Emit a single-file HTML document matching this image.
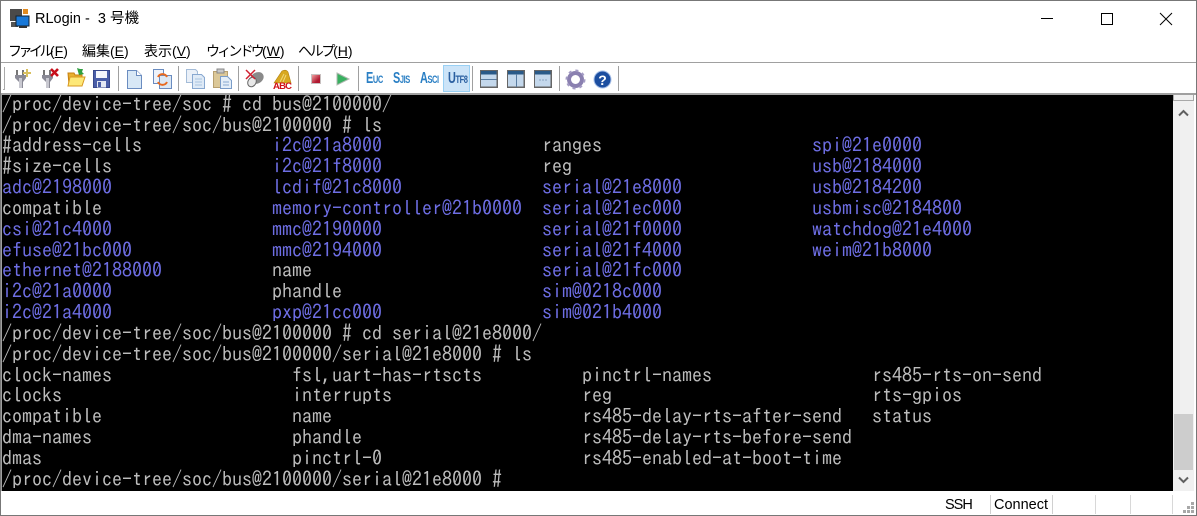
<!DOCTYPE html>
<html><head><meta charset="utf-8"><style>
html,body{margin:0;padding:0;background:#fff}
#w{position:relative;width:1197px;height:516px;overflow:hidden;background:#fff;font-family:"Liberation Sans","Noto Sans CJK JP",sans-serif;color:#000}
.a{position:absolute}
#term{left:2px;top:95px;width:1171px;height:396px;background:#000;overflow:hidden}
.l{position:absolute;left:0;white-space:pre;font:20px/21px "IPAGothic","Liberation Mono",monospace;color:#bcbcbc}
.l b{font-weight:normal;color:#6e6ee4}
.m{position:absolute;top:41px;font-size:14px;line-height:20px;white-space:pre}
.m u{text-decoration:underline}
.s{position:absolute;top:66px;width:1px;height:25px;background:#a0a0a0}
.t{position:absolute;top:71px;color:#2a7fc4;font:bold 11px/16px "Liberation Sans",sans-serif;letter-spacing:-.6px;white-space:pre;transform:scaleX(.68);transform-origin:0 0}
.t i{font-style:normal;font-size:16px}
svg{position:absolute;overflow:visible}
</style></head><body><div id="w">
<div class="a" style="left:0;top:0;width:1195px;height:514px;border:1px solid #777"></div>

<svg style="left:9px;top:8px" width="22" height="22" viewBox="0 0 22 22"><rect x="1" y="1" width="12" height="12" fill="#4a4a4a"/><rect x="2" y="14" width="7" height="5" fill="#555"/><path d="M14 1h5v5h-5z" fill="#e08a20"/><rect x="7" y="8" width="13" height="10" fill="#1878d8" stroke="#123"/><rect x="10" y="18" width="8" height="2" fill="#333"/></svg>
<div class="a" style="left:35px;top:9px;font-size:14.500px;line-height:21px;white-space:pre">RLogin -  3 号機</div>

<div class="a" style="left:1041px;top:18px;width:12px;height:1px;background:#000"></div>
<div class="a" style="left:1101px;top:13px;width:10px;height:10px;border:1px solid #000"></div>
<svg style="left:1160px;top:13px" width="12" height="12"><path d="M0 0L12 12M12 0L0 12" stroke="#000" stroke-width="1"/></svg>

<div class="m" style="left:8px"><span style="letter-spacing:-3.500px">ファイル</span>(<u>F</u>)</div>
<div class="m" style="left:82px">編集(<u>E</u>)</div>
<div class="m" style="left:144px">表示(<u>V</u>)</div>
<div class="m" style="left:206px"><span style="letter-spacing:-2.800px">ウィンドウ</span>(<u>W</u>)</div>
<div class="m" style="left:298px"><span style="letter-spacing:-2.300px">ヘルプ</span>(<u>H</u>)</div>
<div class="a" style="left:1px;top:62px;width:1195px;height:1px;background:#a0a0a0"></div>

<div class="a" style="left:3px;top:67px;width:2px;height:23px;border-left:1px solid #aaa;border-bottom:1px solid #aaa;box-sizing:border-box;transform:scaleX(-1)"></div>
<div class="s" style="left:118px"></div><div class="s" style="left:178px"></div><div class="s" style="left:238px"></div><div class="s" style="left:298px"></div><div class="s" style="left:358px"></div><div class="s" style="left:472px"></div><div class="s" style="left:559px"></div><div class="s" style="left:618px"></div>

<!-- plug add -->
<svg style="left:14px;top:68px" width="20" height="22" viewBox="0 0 20 22"><path d="M3 2v5M9 2v5" stroke="#777" stroke-width="2"/><path d="M1 7h11v3l-3 4v6H5v-6l-4-4z" fill="#8a8a96"/><path d="M5 10h3v10H5z" fill="#c8c8d0"/><path d="M9 5h8M13 1v8" stroke="#d8c060" stroke-width="2"/></svg>
<!-- plug del -->
<svg style="left:41px;top:68px" width="20" height="22" viewBox="0 0 20 22"><path d="M3 2v5M9 2v5" stroke="#777" stroke-width="2"/><path d="M1 7h11v3l-3 4v6H5v-6l-4-4z" fill="#8a8a96"/><path d="M5 10h3v10H5z" fill="#c8c8d0"/><path d="M10 1l7 7M17 1l-7 7" stroke="#c8101c" stroke-width="2.600"/></svg>
<!-- folder -->
<svg style="left:67px;top:68px" width="19" height="20" viewBox="0 0 19 20"><path d="M1 5h6l1 2h7v10H2z" fill="#e8b030" stroke="#c88010"/><path d="M3 9h15l-3 9H1z" fill="#fde878" stroke="#d89820"/><path d="M10 0l3 1 3 0-1 3 2 2-5 1z" fill="#30a040"/></svg>
<!-- save -->
<svg style="left:93px;top:70px" width="17" height="18" viewBox="0 0 17 18"><rect x=".5" y=".5" width="16" height="17" fill="#4a5ea8" stroke="#38488c"/><rect x="3" y="1" width="11" height="7" fill="#f4f6fc"/><rect x="4" y="11" width="9" height="6.500" fill="#e4e8f4"/><rect x="5" y="12" width="3" height="5" fill="#4a5ea8"/></svg>
<!-- new -->
<svg style="left:127px;top:70px" width="15" height="19" viewBox="0 0 15 19"><path d="M.5.500h9l5 5v13H.5z" fill="#d8e8f6" stroke="#6a8cc0"/><path d="M9.500.500v5h5" fill="#fff" stroke="#6a8cc0"/></svg>
<!-- reload doc -->
<svg style="left:153px;top:69px" width="19" height="20" viewBox="0 0 19 20"><path d="M.5.500h10v14H.5z" fill="#eef2fa" stroke="#6a8cc0"/><path d="M6.500 6.500h12v13h-12z" fill="#dce8f4" stroke="#6a8cc0"/><path d="M5 8a5 5 0 0 1 9 0M14 13a5 5 0 0 1-9 0" fill="none" stroke="#e86a20" stroke-width="2"/></svg>
<!-- copy -->
<svg style="left:186px;top:69px" width="19" height="20" viewBox="0 0 19 20"><path d="M.5.500h9l2 2v11H.5z" fill="#eaf0f8" stroke="#a4bcd8"/><path d="M6.500 5.500h9l3 3v11h-12z" fill="#dfeaf6" stroke="#88a8d0"/><path d="M9 10h7M9 13h7M9 16h7" stroke="#a8c4e0"/></svg>
<!-- paste -->
<svg style="left:213px;top:68px" width="19" height="21" viewBox="0 0 19 21"><rect x=".5" y="3.500" width="14" height="16" fill="#dcc898" stroke="#b8a070"/><rect x="4" y="1" width="7" height="4" fill="#c8c8c8" stroke="#888"/><path d="M7.500 8.500h7l4 4v8h-11z" fill="#e4eef8" stroke="#7a9cc8"/><path d="M10 14h6M10 17h6" stroke="#88a8d0"/></svg>
<!-- bell -->
<svg style="left:245px;top:70px" width="20" height="18" viewBox="0 0 20 18"><ellipse cx="12" cy="8" rx="7" ry="5.500" fill="#8a8a8a" transform="rotate(-30 12 8)"/><ellipse cx="7" cy="12" rx="4" ry="5" fill="#e8e8e8" stroke="#666" transform="rotate(30 7 12)"/><path d="M1 0l9 9M10 0l-9 9" stroke="#d02030" stroke-width="1.500"/></svg>
<!-- abc -->
<svg style="left:273px;top:69px" width="19" height="21" viewBox="0 0 19 21"><path d="M1 14L9 2q4-2 6 1l3 11z" fill="#d8a820" stroke="#b08010" stroke-width=".6"/><path d="M7 13l4-8M10 13l3-7" stroke="#f0d878"/><text x="0" y="20" font-family="Liberation Sans" font-weight="bold" font-size="9.500" fill="#d01018" textLength="19">ABC</text></svg>
<!-- stop -->
<div class="a" style="left:311px;top:74px;width:10px;height:10px;background:linear-gradient(135deg,#f0a0a0,#b01830 70%);border:1px solid #c8c0c0;box-sizing:border-box"></div>
<!-- play -->
<svg style="left:336px;top:72px" width="13" height="14" viewBox="0 0 13 14"><path d="M1 1l12 6-12 6z" fill="#38b060" stroke="#b0b8b0"/></svg>

<div class="t" style="left:366px"><i>E</i>UC</div>
<div class="t" style="left:393px"><i>S</i>JIS</div>
<div class="t" style="left:420px"><i>A</i>SCI</div>
<div class="a" style="left:443px;top:65px;width:27px;height:27px;background:#cce4f8;border:1px solid #99d0f4;box-sizing:border-box"></div>
<div class="t" style="left:448px;color:#2a5fa0"><i>U</i>TF8</div>

<svg style="left:480px;top:70px" width="18" height="18"><rect width="18" height="18" fill="#666"/><rect x="1" y="1" width="15.500" height="15.500" fill="#c4d8ec"/><rect x="1" y="1" width="15.500" height="3.500" fill="#2a5a88"/><rect x="1" y="9" width="15.500" height="1" fill="#5a7ca0"/></svg>
<svg style="left:507px;top:70px" width="18" height="18"><rect width="18" height="18" fill="#666"/><rect x="1" y="1" width="15.500" height="15.500" fill="#c4d8ec"/><rect x="1" y="1" width="15.500" height="3.500" fill="#2a5a88"/><rect x="9" y="4" width="1" height="13" fill="#5a7ca0"/></svg>
<svg style="left:534px;top:70px" width="18" height="18"><rect width="18" height="18" fill="#666"/><rect x="1" y="1" width="15.500" height="15.500" fill="#c4d8ec"/><rect x="1" y="1" width="15.500" height="3.500" fill="#2a5a88"/><path d="M5 10h9" stroke="#8aa4c0" stroke-dasharray="2 1"/></svg>

<svg style="left:566px;top:70px" width="19" height="19" viewBox="0 0 19 19"><circle cx="9.500" cy="9.500" r="6.500" fill="none" stroke="#8a80b0" stroke-width="4"/><circle cx="9.500" cy="9.500" r="9" fill="none" stroke="#a49cc4" stroke-width="2" stroke-dasharray="3 4"/></svg>
<svg style="left:593px;top:70px" width="19" height="19" viewBox="0 0 19 19"><circle cx="9.500" cy="9.500" r="8.500" fill="#1c4ea0" stroke="#a8c0e8"/><text x="9.500" y="15" text-anchor="middle" font-family="Liberation Sans" font-weight="bold" font-size="14" fill="#fff">?</text></svg>

<div class="a" style="left:1px;top:93px;width:1195px;height:2px;background:#a0a0a0"></div>
<div class="a" style="left:1px;top:95px;width:1px;height:396px;background:#a0a0a0"></div>

<div class="a" id="term">
<div class="l" style="top:-1px">/proc/device-tree/soc # cd bus@2100000/</div>
<div class="l" style="top:20px">/proc/device-tree/soc/bus@2100000 # ls</div>
<div class="l" style="top:40px">#address-cells             <b>i2c@21a8000</b>                <span>ranges</span>                     <b>spi@21e0000</b></div>
<div class="l" style="top:61px">#size-cells                <b>i2c@21f8000</b>                reg                        <b>usb@2184000</b></div>
<div class="l" style="top:82px"><b>adc@2198000</b>                <b>lcdif@21c8000</b>              <b>serial@21e8000</b>             <b>usb@2184200</b></div>
<div class="l" style="top:103px">compatible                 <b>memory-controller@21b0000</b>  <b>serial@21ec000</b>             <b>usbmisc@2184800</b></div>
<div class="l" style="top:124px"><b>csi@21c4000</b>                <b>mmc@2190000</b>                <b>serial@21f0000</b>             <b>watchdog@21e4000</b></div>
<div class="l" style="top:145px"><b>efuse@21bc000</b>              <b>mmc@2194000</b>                <b>serial@21f4000</b>             <b>weim@21b8000</b></div>
<div class="l" style="top:165px"><b>ethernet@2188000</b>           name                       <b>serial@21fc000</b></div>
<div class="l" style="top:186px"><b>i2c@21a0000</b>                phandle                    <b>sim@0218c000</b></div>
<div class="l" style="top:207px"><b>i2c@21a4000</b>                <b>pxp@21cc000</b>                <b>sim@021b4000</b></div>
<div class="l" style="top:228px">/proc/device-tree/soc/bus@2100000 # cd serial@21e8000/</div>
<div class="l" style="top:249px">/proc/device-tree/soc/bus@2100000/serial@21e8000 # ls</div>
<div class="l" style="top:270px">clock-names                  fsl,uart-has-rtscts          pinctrl-names                rs485-rts-on-send</div>
<div class="l" style="top:290px">clocks                       interrupts                   reg                          rts-gpios</div>
<div class="l" style="top:311px">compatible                   name                         rs485-delay-rts-after-send   status</div>
<div class="l" style="top:332px">dma-names                    phandle                      rs485-delay-rts-before-send</div>
<div class="l" style="top:353px">dmas                         pinctrl-0                    rs485-enabled-at-boot-time</div>
<div class="l" style="top:374px">/proc/device-tree/soc/bus@2100000/serial@21e8000 #</div>
</div>

<div class="a" style="left:1173px;top:95px;width:21px;height:396px;background:#f0f0f0"></div>
<div class="a" style="left:1173px;top:95px;width:21px;height:6px;background:#f0f0f0;border:1px solid #a8a8a8;border-top:none;box-sizing:border-box"></div>
<svg style="left:1178px;top:109px" width="11" height="8"><path d="M1 6.500L5.500 2 10 6.500" fill="none" stroke="#606060" stroke-width="2"/></svg>
<div class="a" style="left:1174px;top:414px;width:19px;height:56px;background:#cdcdcd"></div>
<svg style="left:1178px;top:476px" width="11" height="8"><path d="M1 1.500L5.500 6 10 1.500" fill="none" stroke="#606060" stroke-width="2"/></svg>

<div class="a" style="left:945px;top:496px;font-size:14.500px;line-height:19px;letter-spacing:-1px">SSH</div>
<div class="a" style="left:994px;top:496px;font-size:14.500px;line-height:19px">Connect</div>
<div class="a" style="left:990px;top:495px;width:1px;height:19px;background:#d0d0d0"></div>
<div class="a" style="left:1052px;top:495px;width:1px;height:19px;background:#d0d0d0"></div>
<div class="a" style="left:1095px;top:495px;width:1px;height:19px;background:#d8d8d8"></div>
<div class="a" style="left:1130px;top:495px;width:1px;height:19px;background:#d8d8d8"></div>
<div class="a" style="left:1172px;top:495px;width:1px;height:19px;background:#d8d8d8"></div>
<svg style="left:1183px;top:502px" width="12" height="12" fill="#a8a8a8"><rect x="8" y="0" width="3" height="3"/><rect x="4" y="4" width="3" height="3"/><rect x="8" y="4" width="3" height="3"/><rect x="0" y="8" width="3" height="3"/><rect x="4" y="8" width="3" height="3"/><rect x="8" y="8" width="3" height="3"/></svg>
</div></body></html>
